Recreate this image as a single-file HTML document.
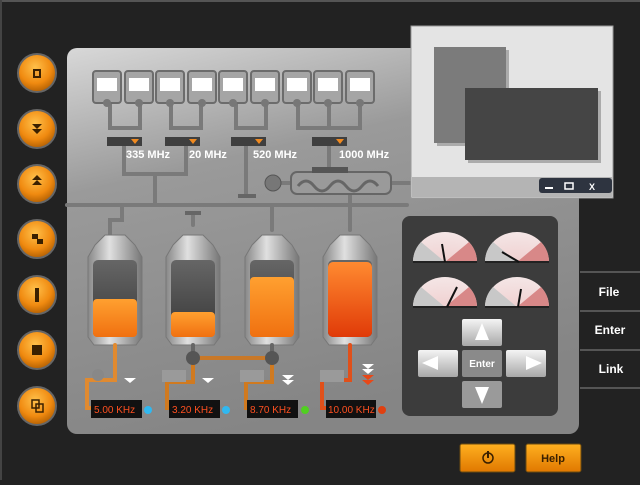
<!DOCTYPE html>
<html><head><style>
body{margin:0;background:#222;width:640px;height:480px;overflow:hidden;font-family:"Liberation Sans",sans-serif}
</style></head><body>
<svg width="640" height="480" xmlns="http://www.w3.org/2000/svg" font-family="Liberation Sans, sans-serif">
<defs>
<linearGradient id="pn" x1="0" y1="0" x2="0.3" y2="1"><stop offset="0" stop-color="#d8d8d8"/><stop offset="0.35" stop-color="#9a9a9a"/><stop offset="1" stop-color="#858585"/></linearGradient>
<radialGradient id="ob" cx="0.45" cy="0.35" r="0.7"><stop offset="0" stop-color="#ffc04a"/><stop offset="0.6" stop-color="#f08a10"/><stop offset="1" stop-color="#a85800"/></radialGradient>
<linearGradient id="tk" x1="0" y1="0" x2="1" y2="0"><stop offset="0" stop-color="#888"/><stop offset="0.4" stop-color="#e0e0e0"/><stop offset="1" stop-color="#777"/></linearGradient>
<linearGradient id="of" x1="0" y1="0" x2="0" y2="1"><stop offset="0" stop-color="#ffa030"/><stop offset="1" stop-color="#f07010"/></linearGradient>
<linearGradient id="rf" x1="0" y1="0" x2="0" y2="1"><stop offset="0" stop-color="#ff8a30"/><stop offset="1" stop-color="#e03a08"/></linearGradient>
<linearGradient id="dk" x1="0" y1="0" x2="0" y2="1"><stop offset="0" stop-color="#666"/><stop offset="1" stop-color="#383838"/></linearGradient>
<linearGradient id="bt" x1="0" y1="0" x2="0" y2="1"><stop offset="0" stop-color="#f4f4f4"/><stop offset="1" stop-color="#a8a8a8"/></linearGradient>
<linearGradient id="ab" x1="0" y1="0" x2="0" y2="1"><stop offset="0" stop-color="#ffb020"/><stop offset="1" stop-color="#e07800"/></linearGradient>
<radialGradient id="gg" cx="0.5" cy="1" r="1"><stop offset="0" stop-color="#f0d0d0"/><stop offset="1" stop-color="#f4e6e6"/></radialGradient>
</defs>
<rect x="0" y="0" width="640" height="2" fill="#555"/>
<rect x="0" y="0" width="2" height="480" fill="#444"/>
<!-- main panel -->
<rect x="67" y="48" width="512" height="386" rx="10" fill="url(#pn)"/>
<!-- left buttons -->
<g stroke="#666" stroke-width="2">
<circle cx="37" cy="73" r="19" fill="url(#ob)"/><circle cx="37" cy="129" r="19" fill="url(#ob)"/><circle cx="37" cy="184" r="19" fill="url(#ob)"/><circle cx="37" cy="239" r="19" fill="url(#ob)"/><circle cx="37" cy="295" r="19" fill="url(#ob)"/><circle cx="37" cy="350" r="19" fill="url(#ob)"/><circle cx="37" cy="406" r="19" fill="url(#ob)"/>
</g>
<g fill="#3a2000">
<rect x="33" y="69" width="8" height="9"/><rect x="35" y="71" width="4" height="5" fill="#f0a030"/>
<path d="M32 124h10l-5 5zM32 129h10l-5 5z"/>
<path d="M32 180h10l-5-5zM32 185h10l-5-5z"/>
<rect x="32" y="234" width="6" height="5"/><rect x="37" y="239" width="6" height="5"/>
<rect x="35" y="288" width="4" height="14"/>
<rect x="32" y="345" width="10" height="10"/>
<rect x="32" y="400" width="7" height="8" fill="none" stroke="#3a2000" stroke-width="1.5"/><rect x="36" y="404" width="7" height="8" fill="none" stroke="#3a2000" stroke-width="1.5"/>
</g>
<!-- pipes -->
<g fill="none" stroke="#7a7a7a" stroke-width="4" stroke-linecap="round">
<path d="M110 103v25h30v-25M171 103v25h30v-25M236 103v25h30v-25M298 103v25h62v-25M329 103v25"/>
<path d="M124 146v28h62v-28M155 174v30M246 146v50M329 146v22"/>
<path d="M67 205h340"/><path d="M280 183h10M390 183h20M350 195v25"/>
<path d="M110 235v-15h12v-15M193 225v-12M272 230v-25M350 230v-25"/>
</g>
<rect x="238" y="194" width="18" height="4" fill="#666"/>
<rect x="185" y="211" width="16" height="4" fill="#666"/>
<circle cx="273" cy="183" r="8" fill="#777" stroke="#555"/>
<rect x="291" y="172" width="100" height="22" rx="6" fill="#9a9a9a" stroke="#666" stroke-width="2"/>
<path d="M298 186q8-10 16 0t16 0t16 0t16 0t16 0" fill="none" stroke="#666" stroke-width="3"/>
<rect x="312" y="167" width="36" height="6" fill="#555"/>
<!-- top boxes -->
<g>
<g id="bx"><rect x="93" y="71" width="28" height="32" rx="3" fill="#a5a5a5" stroke="#6c6c6c" stroke-width="2"/><rect x="97" y="78" width="20" height="13" fill="#fff"/><circle cx="107" cy="103" r="4" fill="#777"/></g>
<use href="#bx" x="32"/><use href="#bx" x="63"/><use href="#bx" x="95"/><use href="#bx" x="126"/><use href="#bx" x="158"/><use href="#bx" x="190"/><use href="#bx" x="221"/><use href="#bx" x="253"/>
</g>
<g fill="#3f3f3f"><rect x="107" y="137" width="35" height="9"/><rect x="165" y="137" width="35" height="9"/><rect x="231" y="137" width="35" height="9"/><rect x="312" y="137" width="35" height="9"/></g>
<g fill="#f08a20"><path d="M131 139h8l-4 5zM189 139h8l-4 5zM255 139h8l-4 5zM336 139h8l-4 5z"/></g>
<g fill="#fff" font-size="11" font-weight="bold"><text x="126" y="158">335 MHz</text><text x="189" y="158">20 MHz</text><text x="253" y="158">520 MHz</text><text x="339" y="158">1000 MHz</text></g>
<!-- popup -->
<rect x="411" y="26" width="202" height="172" fill="#e4e4e4" stroke="#999"/>
<rect x="412" y="177" width="200" height="20" fill="#b4b4b4"/>
<rect x="437" y="50" width="72" height="96" fill="#555" opacity=".4"/>
<rect x="434" y="47" width="72" height="96" fill="#7b7b7b"/>
<rect x="468" y="91" width="133" height="72" fill="#555" opacity=".4"/>
<rect x="465" y="88" width="133" height="72" fill="#454545"/>
<rect x="539" y="178" width="73" height="15" rx="3" fill="#2e3440"/>
<g fill="#fff"><rect x="545" y="187" width="8" height="2"/><rect x="565" y="183" width="8" height="6" fill="none" stroke="#fff" stroke-width="1.5"/></g>
<text x="589" y="190" fill="#fff" font-size="9" font-weight="bold">X</text>
<!-- tanks -->
<g id="tank">
<path d="M95 245l10-10h20l10 10 7 12v80l-6 8h-42l-6-8v-80z" fill="url(#tk)" stroke="#777"/>
<rect x="93" y="260" width="44" height="77" rx="5" fill="url(#dk)"/>
</g>
<use href="#tank" x="78"/><use href="#tank" x="157"/><use href="#tank" x="235"/>
<rect x="93" y="299" width="44" height="38" rx="4" fill="url(#of)"/>
<rect x="171" y="312" width="44" height="25" rx="4" fill="url(#of)"/>
<rect x="250" y="277" width="44" height="60" rx="4" fill="url(#of)"/>
<rect x="328" y="262" width="44" height="75" rx="5" fill="url(#rf)"/>
<!-- lower pipes -->
<g fill="none" stroke-width="4" stroke-linecap="round">
<path d="M115 345v35h-28v28h6" stroke="#e08a30"/>
<path d="M193 360v22h-26v26h4" stroke="#d07a20"/>
<path d="M272 360v22h-26v26h4" stroke="#d07a20"/>
<path d="M193 358h80" stroke="#c87828"/>
<path d="M350 345v35h-28v28h6" stroke="#e0501a"/>
<path d="M193 345v12M272 345v12" stroke="#666"/>
</g>
<circle cx="193" cy="358" r="7" fill="#555"/><circle cx="272" cy="358" r="7" fill="#555"/>
<circle cx="98" cy="375" r="6" fill="#888"/>
<rect x="162" y="370" width="24" height="12" fill="#9a9a9a"/><rect x="240" y="370" width="24" height="12" fill="#9a9a9a"/><rect x="320" y="370" width="24" height="12" fill="#9a9a9a"/>
<g fill="#fff"><path d="M124 378h12l-6 5zM202 378h12l-6 5zM282 375h12l-6 5zM282 380h12l-6 5zM362 364h12l-6 5zM362 369h12l-6 5z"/></g>
<path d="M362 375h12l-6 5zM362 380h12l-6 5z" fill="#e84818"/>
<g fill="#111"><rect x="91" y="400" width="51" height="18"/><rect x="169" y="400" width="51" height="18"/><rect x="247" y="400" width="51" height="18"/><rect x="326" y="400" width="50" height="18"/></g>
<g fill="#ff5020" font-size="10"><text x="94" y="413">5.00 KHz</text><text x="172" y="413">3.20 KHz</text><text x="250" y="413">8.70 KHz</text><text x="328" y="413">10.00 KHz</text></g>
<circle cx="148" cy="410" r="4" fill="#30b8f0"/><circle cx="226" cy="410" r="4" fill="#30b8f0"/><circle cx="305" cy="410" r="4" fill="#50d020"/><circle cx="382" cy="410" r="4" fill="#e04010"/>
<!-- gauge panel -->
<rect x="402" y="216" width="156" height="200" rx="8" fill="#3c3c3c"/>
<g id="gau">
<path d="M413 262a32 30 0 0 1 64 0z" fill="url(#gg)"/>
<path d="M413 262a32 30 0 0 1 8-20l24 20z" fill="#c8c8c8"/>
<path d="M445 262l24-20a32 30 0 0 1 8 20z" fill="#d88888"/>
<rect x="413" y="261" width="64" height="2" fill="#222"/>
</g>
<use href="#gau" x="72"/><use href="#gau" y="45"/><use href="#gau" x="72" y="45"/>
<g stroke="#111" stroke-width="2"><path d="M442 244l3 18"/><path d="M502 252l17 10"/><path d="M457 287l-10 20"/><path d="M521 289l-3 18"/></g>
<g font-size="10" font-weight="bold" fill="#fff" text-anchor="middle">
<rect x="462" y="319" width="40" height="27" rx="2" fill="url(#bt)"/><path d="M482 323l-7 17h14z" fill="#fff"/>
<rect x="418" y="350" width="40" height="27" rx="2" fill="url(#bt)"/><path d="M422 363l16-7v14z" fill="#fff"/>
<rect x="462" y="350" width="40" height="27" rx="2" fill="#8a8a8a"/><text x="482" y="367">Enter</text>
<rect x="506" y="350" width="40" height="27" rx="2" fill="url(#bt)"/><path d="M542 363l-16-7v14z" fill="#fff"/>
<rect x="462" y="381" width="40" height="27" rx="2" fill="#9a9a9a"/><path d="M482 404l-7-17h14z" fill="#fff"/>
</g>
<!-- right menu -->
<g fill="#555"><rect x="580" y="271" width="60" height="2"/><rect x="580" y="310" width="60" height="2"/><rect x="580" y="349" width="60" height="2"/><rect x="580" y="387" width="60" height="2"/></g>
<g fill="#fff" font-size="12" font-weight="bold" text-anchor="middle"><text x="609" y="296">File</text><text x="610" y="334">Enter</text><text x="611" y="373">Link</text></g>
<!-- bottom buttons -->
<rect x="460" y="444" width="55" height="28" rx="2" fill="url(#ab)" stroke="#6a4a10"/>
<circle cx="488" cy="458" r="5" fill="none" stroke="#3a2000" stroke-width="1.5"/><rect x="487" y="451" width="2" height="7" fill="#3a2000"/>
<rect x="526" y="444" width="55" height="28" rx="2" fill="url(#ab)" stroke="#6a4a10"/>
<text x="553" y="462" fill="#3a2000" font-size="11" font-weight="bold" text-anchor="middle">Help</text>
</svg>
</body></html>
